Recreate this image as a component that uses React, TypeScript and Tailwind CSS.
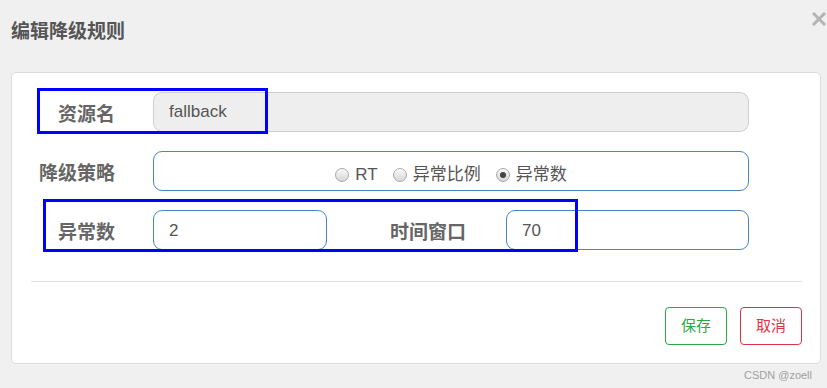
import React from 'react';

const font = { fontFamily: '"Liberation Sans", "Noto Sans CJK SC", sans-serif' };

function Radio({ label, checked }: { label: string; checked?: boolean }) {
  return (
    <label className="flex items-center gap-[6px] text-[17px] text-[#555]">
      <span className="flex h-[14px] w-[14px] items-center justify-center rounded-full border border-[#a9a9a9] bg-gradient-to-b from-[#fafafa] to-[#d6d6d6]">
        {checked && <span className="h-[6px] w-[6px] rounded-full bg-[#444]" />}
      </span>
      <span>{label}</span>
    </label>
  );
}

function Label({ text, className = 'w-[103px]' }: { text: string; className?: string }) {
  return (
    <div className={`${className} shrink-0 translate-y-[3px] text-right text-[19px] font-bold leading-[40px] text-[#666]`}>
      {text}
    </div>
  );
}

export default function App() {
  return (
    <div className="relative h-[388px] w-[827px] overflow-hidden bg-[#f0f0f0]" style={font}>
      <div className="flex h-[72px] items-start justify-between">
        <h1 className="pl-[11px] pt-[22px] text-[19px] font-bold leading-[20px] text-[#555]">编辑降级规则</h1>
        <svg className="mr-[1px] mt-[12px]" width="14" height="14" viewBox="0 0 14 14">
          <path d="M2 2 L12 12 M12 2 L2 12" stroke="#b3b3b3" strokeWidth="3" strokeLinecap="square" />
        </svg>
      </div>

      <div className="ml-[11px] h-[292px] w-[810px] rounded-[5px] border border-[#dcdcdc] bg-white pt-[19px]">
        <div className="flex flex-col gap-[19px]">
          <div className="flex h-[40px] items-center">
            <Label text="资源名" />
            <div className="ml-[38px] flex h-[40px] w-[596px] items-center rounded-[9px] border border-[#cfcfcf] bg-[#eeeeee] pl-[15px] text-[17px] text-[#555]">
              fallback
            </div>
          </div>

          <div className="flex h-[40px] items-center">
            <Label text="降级策略" />
            <div className="ml-[38px] flex h-[40px] w-[596px] items-center justify-center gap-[15px] rounded-[9px] border border-[#4a86c5] pt-[7px]">
              <Radio label="RT" />
              <Radio label="异常比例" />
              <Radio label="异常数" checked />
            </div>
          </div>

          <div className="flex h-[40px] items-center">
            <Label text="异常数" />
            <div className="ml-[38px] flex h-[40px] w-[174px] items-start rounded-[9px] border border-[#4a86c5] pl-[15px] pt-[7px] text-[17px] text-[#555]">
              2
            </div>
            <Label text="时间窗口" className="w-[139px]" />
            <div className="ml-[40px] flex h-[40px] w-[243px] items-start rounded-[9px] border border-[#4a86c5] pl-[15px] pt-[7px] text-[17px] text-[#555]">
              70
            </div>
          </div>
        </div>

        <div className="ml-[19px] mt-[31px] h-px w-[771px] bg-[#e3e3e3]" />

        <div className="ml-[19px] mt-[25px] flex w-[771px] justify-end gap-[13px]">
          <button className="h-[38px] w-[62px] rounded-[4px] border border-[#28a745] bg-white text-[15px] text-[#28a745]">
            保存
          </button>
          <button className="h-[38px] w-[62px] rounded-[4px] border border-[#dc3545] bg-white text-[15px] text-[#dc3545]">
            取消
          </button>
        </div>
      </div>

      <div className="absolute right-[15px] top-[367px] text-[11px] text-[#a0a0a0]">CSDN @zoell</div>

      <div className="absolute left-[37px] top-[88px] h-[46px] w-[231px] border-[3px] border-[#0000ff]" />
      <div className="absolute left-[43px] top-[199px] h-[53px] w-[535px] border-[3px] border-[#0000ff]" />
    </div>
  );
}
